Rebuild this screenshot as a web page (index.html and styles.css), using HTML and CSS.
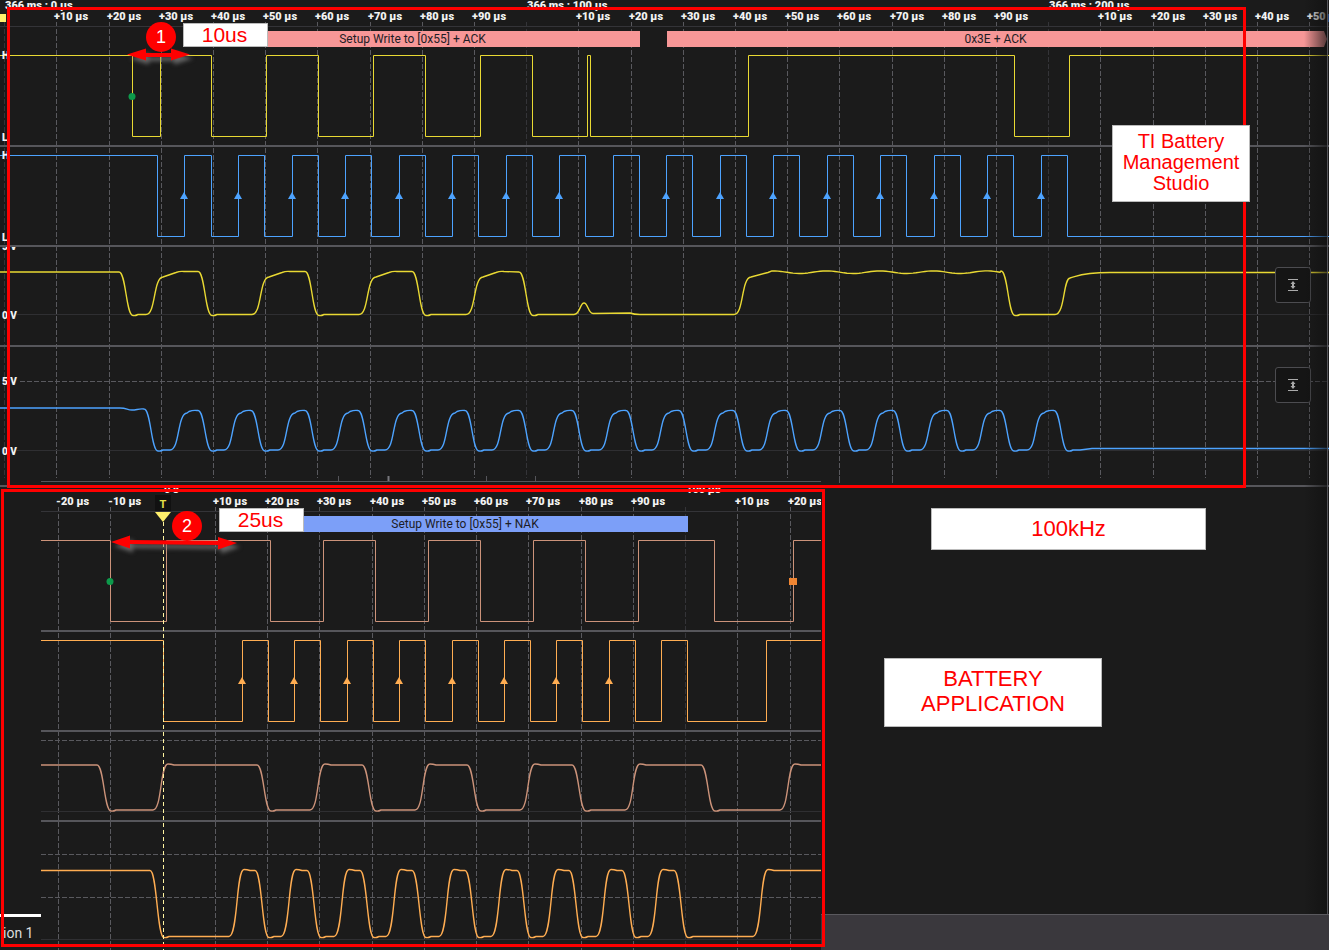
FILE: index.html
```html
<!DOCTYPE html>
<html lang="en">
<head>
<meta charset="utf-8">
<meta name="viewport" content="width=device-width, initial-scale=1">
<title>I2C bus timing comparison</title>
<link rel="stylesheet" href="styles.css">
</head>
<body>
<main class="board">
  <section class="panel panel--studio" aria-label="TI Battery Management Studio capture">
    <svg class="panel__grid" data-grid="studio" aria-hidden="true"></svg>
    <svg class="ruler ruler--studio" data-ruler="studio"></svg>
    <div class="track track--tall">
      <svg class="track__plot" data-plot="studioSda"></svg>
      <div class="bubbles bubbles--studio">
        <span class="bubble bubble--ack bubble--address">Setup Write to [0x55] + ACK</span>
        <span class="bubble bubble--ack bubble--data">0x3E + ACK</span>
      </div>
    </div>
    <div class="track track--digital"><svg class="track__plot" data-plot="studioScl"></svg></div>
    <div class="track track--digital">
      <svg class="track__plot" data-plot="studioSdaAnalog"></svg>
      <button class="fit" type="button" aria-label="Fit channel height"><svg width="12" height="14" viewBox="0 0 12 14"><path d="M1 1.5h10M1 12.5h10" stroke="#aaa" stroke-width="1"/><path d="M6 3l2.500 3h-1.500v2h1.500l-2.500 3-2.500-3h1.500v-2h-1.500z" fill="#aaa"/></svg></button>
    </div>
    <div class="track track--last">
      <svg class="track__plot" data-plot="studioSclAnalog"></svg>
      <button class="fit" type="button" aria-label="Fit channel height"><svg width="12" height="14" viewBox="0 0 12 14"><path d="M1 1.5h10M1 12.5h10" stroke="#aaa" stroke-width="1"/><path d="M6 3l2.500 3h-1.500v2h1.500l-2.500 3-2.500-3h1.500v-2h-1.500z" fill="#aaa"/></svg></button>
    </div>
  </section>

  <div class="lower">
    <div class="session"><span class="session__tab">ion 1</span></div>
    <section class="panel panel--app" aria-label="Battery application capture">
      <svg class="panel__grid" data-grid="app" aria-hidden="true"></svg>
      <svg class="ruler ruler--app" data-ruler="app"></svg>
      <div class="track track--tall">
        <svg class="track__plot" data-plot="appSda"></svg>
        <div class="bubbles bubbles--app">
          <span class="bubble bubble--nak">Setup Write to [0x55] + NAK</span>
        </div>
      </div>
      <div class="track track--digital"><svg class="track__plot" data-plot="appScl"></svg></div>
      <div class="track track--short"><svg class="track__plot" data-plot="appSdaAnalog"></svg></div>
      <div class="track track--open"><svg class="track__plot" data-plot="appSclAnalog"></svg></div>
      <svg class="trigger" width="18" height="464" aria-label="Trigger">
        <rect x="1" y="8" width="16" height="16" fill="#111"/>
        <text class="trigger__letter" x="9" y="21" text-anchor="middle">T</text>
        <path d="M1 25h16l-8 10z" fill="#fff06c"/>
        <path d="M9.500 35V464" stroke="#fff4a0" stroke-dasharray="4 3"/>
      </svg>
    </section>
    <aside class="side"><div class="statusbar"></div></aside>
  </div>

  <div class="edge"></div>

  <div class="frame frame--studio"></div>
  <div class="frame frame--app"></div>
  <p class="note note--period note--period-a">10us</p>
  <p class="note note--period note--period-b">25us</p>
  <p class="note note--studio">TI Battery Management Studio</p>
  <p class="note note--clock">100kHz</p>
  <p class="note note--app">BATTERY<br>APPLICATION</p>
  <svg class="arrow arrow--a" width="72" height="20" aria-hidden="true">
    <path class="arrow__shape" d="M0 6.500l19-6v4.500h25V.5l19 6-19 6V9H19v3.500z"/>
  </svg>
  <svg class="arrow arrow--b" width="136" height="22" aria-hidden="true">
    <path class="arrow__shape" d="M0 7l19-6.500v4.500l88 1V2l19 6-19 6.500V10l-88-1v4.500z"/>
  </svg>
  <span class="badge badge--a">1</span>
  <span class="badge badge--b">2</span>
</main>
<script src="plots.js"></script>
</body>
</html>
```
FILE: styles.css
```css
* { box-sizing: border-box; }

body {
  margin: 0;
  background: #1b1b1b;
  color: #eee;
  font-family: Roboto, "Liberation Sans", sans-serif;
}

.board {
  position: relative;
  min-height: 100vh;
  display: flex;
  flex-direction: column;
  overflow: hidden;
}

.panel { position: relative; min-width: 0; }

.panel__grid {
  position: absolute;
  inset: 0;
  width: 100%;
  height: 100%;
}

.ruler {
  position: relative;
  display: block;
  width: 100%;
  border-bottom: 1px solid #343438;
}
.ruler--studio { height: 27px; }
.ruler--app { height: 25px; }

.ruler text, .scale {
  font: 900 11px Roboto, "Liberation Sans", sans-serif;
  fill: #f2f2f2;
}
.scale { font-size: 10px; }

.track {
  position: relative;
  display: grid;
  align-items: start;
  border-bottom: 2px solid #56565b;
}
.track > * { grid-area: 1 / 1; }
.track__plot { display: block; width: 100%; height: 100%; }
.track--tall { height: 120px; }
.track--digital { height: 100px; }
.track--short { height: 90px; }
.track--last { height: 140px; }
.track--open { height: 128px; border-bottom: 0; }

.grid-line { stroke: #59595e; stroke-dasharray: 5 2; }
.grid-line--major { stroke: #343438; }
.zero-line { stroke: #2f2f32; }
.wave { fill: none; stroke-width: 1; }
.wave--analog { stroke-width: 1.400; stroke-linejoin: round; }
.yellow { stroke: #e9d933; }
.blue { stroke: #4da3ff; }
.tan { stroke: #cc937a; }
.orange { stroke: #ffad52; }
.tip--blue { fill: #4da3ff; }
.tip--orange { fill: #ffad52; }

.bubbles { display: flex; padding-top: 4px; }
.bubbles--studio { padding-left: 185px; padding-right: 2px; gap: 27px; }
.bubbles--app { padding-left: 201px; }
.bubble {
  height: 16px;
  color: #1d1d26;
  font-size: 12px;
  line-height: 16px;
  text-align: center;
  white-space: nowrap;
}
.bubble--ack { background: #f79797; }
.bubble--address { width: 455px; }
.bubble--data {
  flex: 1;
  padding-right: 3px;
  clip-path: polygon(0 0, calc(100% - 3px) 0, 100% 50%, calc(100% - 3px) 100%, 0 100%);
}
.bubble--nak { width: 446px; background: #7c9ff8; }

.fit {
  justify-self: end;
  display: flex;
  align-items: center;
  justify-content: center;
  width: 36px;
  height: 36px;
  margin: 20px 18px 0 0;
  padding: 0;
  border: 1px solid #4c4c50;
  border-radius: 3px;
  background: #151515;
}

.lower {
  flex: 1;
  display: grid;
  grid-template-columns: 41px 780px 1fr;
}

.session {
  display: flex;
  flex-direction: column;
  justify-content: flex-end;
}
.session__tab {
  height: 36px;
  padding-left: 3px;
  border-top: 3px solid #fff;
  color: #ddd;
  font-size: 14px;
  line-height: 32px;
  white-space: nowrap;
}

.trigger { position: absolute; left: 113px; top: 0; }
.trigger__letter { font: bold 11px Roboto, sans-serif; fill: #e6e04a; }

.side {
  display: flex;
  flex-direction: column;
  justify-content: flex-end;
}
.statusbar {
  height: 36px;
  border-top: 1px solid #5a595e;
  background: #3a383d;
}

.edge {
  position: absolute;
  top: 0;
  right: 1px;
  bottom: 36px;
  width: 24px;
  border-right: 1px solid #55555a;
  background: linear-gradient(to right, rgba(16, 16, 16, 0), rgba(16, 16, 16, 0.7));
  pointer-events: none;
}

.frame { position: absolute; border: 3px solid #f00; pointer-events: none; }
.frame--studio { left: 7px; top: 7px; width: 1239px; height: 481px; }
.frame--app { left: 1px; top: 489px; width: 824px; height: 458px; }

.note {
  position: absolute;
  display: flex;
  align-items: center;
  justify-content: center;
  margin: 0;
  padding-bottom: 2px;
  border: 1px solid #bbb;
  background: #fff;
  color: #f00;
  font-family: "Liberation Sans", Arial, sans-serif;
  font-size: 22px;
  line-height: 25px;
  text-align: center;
}
.note--period { width: 85px; height: 24px; padding-right: 2px; font-size: 21px; }
.note--period-a { left: 183px; top: 23px; }
.note--period-b { left: 219px; top: 508px; }
.note--studio {
  left: 1112px;
  top: 125px;
  width: 138px;
  height: 77px;
  font-size: 20px;
  line-height: 21px;
}
.note--clock { left: 931px; top: 508px; width: 275px; height: 42px; }
.note--app { left: 884px; top: 658px; width: 218px; height: 69px; padding-bottom: 4px; }

.arrow { position: absolute; overflow: visible; }
.arrow--a { left: 127px; top: 48px; }
.arrow--b { left: 111px; top: 535px; }
.arrow__shape { fill: #f00; filter: drop-shadow(3px 4px 2px rgba(120, 120, 120, 0.800)); }

.badge {
  position: absolute;
  width: 30px;
  height: 30px;
  border-radius: 50%;
  background: #f00;
  color: #fff;
  font: 18px/30px "Liberation Sans", Arial, sans-serif;
  text-align: center;
}
.badge--a { left: 146px; top: 22px; }
.badge--b { left: 172px; top: 511px; }
```
FILE: plots.js
```js
const FAR = 4000;

const views = {
  studio: { origin: 0, zero: 4.6, step: 52.2, first: 0, count: 26, gridTop: 22, labelY: 20, majorY: 9,
    majors: { 0: "366 ms : 0 µs", 10: "366 ms : 100 µs", 20: "366 ms : 200 µs" } },
  app: { origin: 41, zero: 163.24, step: 52.25, first: -2, count: 15, gridTop: 20, labelY: 18, majorY: 6,
    majors: { 0: "0 s", 10: "100 µs" } }
};

const line = (cls, x1, y1, x2, y2) =>
  `<line class="${cls}" x1="${x1}" y1="${y1}" x2="${x2}" y2="${y2}"/>`;

function eachTick(view, fn) {
  for (let i = view.first; i < view.first + view.count; i++) {
    fn(i, Math.floor(view.zero + i * view.step) - view.origin);
  }
}

function grid(name) {
  const view = views[name];
  let out = "";
  eachTick(view, (i, x) => {
    if (name === "app" && i === 0) return;
    const major = view.majors[i] ? " grid-line--major" : "";
    out += line("grid-line" + major, x + 0.5, view.gridTop, x + 0.5, name === "studio" ? 478 : "100%");
  });
  return out;
}

function ruler(name) {
  const view = views[name];
  let out = name === "studio" ? '<rect x="0" y="14" width="6" height="8" fill="#fff06c"/>' : "";
  eachTick(view, (i, x) => {
    if (view.majors[i]) {
      out += `<text x="${x + 1}" y="${view.majorY}">${view.majors[i]}</text>`;
    } else {
      const n = i < 0 ? i * 10 : "+" + (i % 10) * 10;
      out += `<text x="${x - 2}" y="${view.labelY}">${n} µs</text>`;
    }
  });
  return out;
}

/* Square wave that starts high and toggles at every edge. */
function digital(cls, edges, hi, lo, origin) {
  let d = `M${-origin} ${hi}`;
  let high = true;
  edges.forEach(x => {
    d += `H${x + 0.5 - origin}V${high ? lo : hi}`;
    high = !high;
  });
  return `<path class="wave ${cls}" d="${d}H${FAR}"/>`;
}

function tips(cls, xs, y, origin) {
  return xs.map(x => {
    const cx = x - origin;
    return `<path class="${cls}" d="M${cx} ${y}l4 7h-8z"/>`;
  }).join("");
}

const fall = (x, hi, lo) =>
  `L${x - 13} ${hi}C${x - 6} ${hi} ${x - 6} ${lo + 1} ${x + 1} ${lo + 1}Q${x + 3} ${lo + 1.5} ${x + 6} ${lo}`;
const softRise = (x, hi, lo, bend, ramp) =>
  `L${x - 14} ${lo}C${x - 4} ${lo} ${x - 7} ${hi + bend} ${x + 3} ${hi + bend - 1}L${x + ramp - 4} ${hi + 0.5}Q${x + ramp} ${hi - 1} ${x + ramp + 4} ${hi - 0.5}`;
const rise = (x, hi, lo) =>
  `L${x - 13} ${lo}C${x - 4} ${lo} ${x - 6} ${hi - 1} ${x + 2} ${hi - 1}Q${x + 5} ${hi - 1} ${x + 8} ${hi}`;
const analog = (cls, d, origin) =>
  `<path class="wave wave--analog ${cls}" transform="translate(${-origin} 0)" d="${d}"/>`;

const studioSda = [132, 160, 211, 266, 318, 373, 425, 480, 532, 587, 590, 748, 1014, 1069];
const studioScl = [157, 184, 211, 238, 264, 292, 318, 345, 371, 399, 425, 452, 478, 506, 532, 559, 585, 613,
  639, 666, 692, 720, 746, 773, 799, 827, 853, 880, 906, 934, 960, 987, 1013, 1041, 1067];
const appSda = [110, 166, 270, 323, 375, 428, 480, 533, 585, 638, 714, 793];
const appScl = [163, 242, 268, 294, 320, 347, 373, 399, 425, 452, 478, 504, 530, 556, 582, 609, 635, 661, 687, 766];
const rising = edges => edges.filter((x, i) => i % 2 === 1);
const label = (text, y) => `<text class="scale" x="2" y="${y}">${text}</text>`;

/* Clock crosstalk seen on the data line while it is held high. */
function ripple(from, to, mid) {
  let d = "";
  for (let x = from; x <= to; x += 3) {
    d += `L${x} ${(mid - 1.3 * Math.cos(2 * Math.PI * (x - 773) / 53.4)).toFixed(2)}`;
  }
  return d;
}

function studioSdaCurve() {
  const hi = 25, lo = 67.5;
  let d = `M0 ${hi}`;
  for (let i = 0; i < 8; i += 2) {
    d += fall(studioSda[i], hi - (i ? 0.5 : 0), lo) + softRise(studioSda[i + 1], hi, lo, 6, 20);
  }
  d += fall(532, hi, lo) + `L574 ${lo}C580 ${lo} 580 56 584 56S588 66 593 66.500L630 66Q634 ${lo} 640 ${lo}`;
  d += `L734 ${lo}C744 ${lo} 741 31 751 30L768 25.500` + ripple(772, 1000, 25.2);
  d += fall(1014, 24, lo) + `L1055 ${lo}C1065 ${lo} 1063 32 1070 31C1078 29 1082 25.500 1110 25.500H${FAR}`;
  return d;
}

function studioSclCurve() {
  const hi = 64, lo = 103;
  let d = "M0 61H120C127 61 127 63 132 63S138 61.500 144 62";
  d += fall(157, 62, lo);
  for (let i = 1; i < studioScl.length; i += 2) {
    d += softRise(studioScl[i], hi, lo, 3, 9) + fall(studioScl[i + 1], hi - 0.5, lo);
  }
  return d + `H1080L1092 101.500H${FAR}`;
}

function stepCurve(edges, hi, lo) {
  let d = `M0 ${hi}`;
  edges.forEach((x, i) => { d += (i % 2 ? rise : fall)(x, hi, lo); });
  return d + `H${FAR}`;
}

const timeline = '<path d="M41 134.500H821" stroke="#55555a"/>' +
  '<path d="M338.500 129v5M486.500 129v5M535.500 129v5M839.500 129v7M892.500 129v7" stroke="#55555a"/>' +
  '<path d="M388.500 129v5" stroke="#77777c" stroke-width="2"/>';

const plots = {
  studioSda: () => digital("yellow", studioSda, 28.5, 109.5, 0) +
    '<circle cx="132" cy="69.500" r="3.500" fill="#0d9a4b"/>' + label("H", 32) + label("L", 114),
  studioScl: () => digital("blue", studioScl, 8.5, 89.5, 0) +
    tips("tip--blue", rising(studioScl).filter(x => x !== 613), 45, 0) + label("H", 12) + label("L", 94),
  studioSdaAnalog: () => line("zero-line", 17, 67.5, "100%", 67.5) +
    analog("yellow", studioSdaCurve(), 0) + label("5 V", 3) + label("0 V", 72),
  studioSclAnalog: () => line("grid-line", 20, 34.5, "100%", 34.5) + line("zero-line", 17, 103.5, "100%", 103.5) +
    timeline + analog("blue", studioSclCurve(), 0) + label("5 V", 38) + label("0 V", 108),
  appSda: () => digital("tan", appSda, 28.5, 109.5, 41) +
    '<circle cx="69" cy="69.500" r="3.500" fill="#0d9a4b"/><rect x="748" y="66" width="8" height="7" fill="#ef8532"/>',
  appScl: () => digital("orange", appScl, 8.5, 89.5, 41) +
    tips("tip--orange", rising(appScl).filter(x => x < 620), 45, 41),
  appSdaAnalog: () => line("grid-line", 0, 8.5, "100%", 8.5) + line("zero-line", 0, 79.5, "100%", 79.5) +
    analog("tan", stepCurve(appSda, 33, 78), 41),
  appSclAnalog: () => line("grid-line", 0, 32.5, "100%", 32.5) + line("grid-line", 0, 75.5, "100%", 75.5) +
    line("zero-line", 0, 117.5, "100%", 117.5) + analog("orange", stepCurve(appScl, 48.5, 114.5), 41)
};

document.querySelectorAll("[data-grid]").forEach(el => { el.innerHTML = grid(el.dataset.grid); });
document.querySelectorAll("[data-ruler]").forEach(el => { el.innerHTML = ruler(el.dataset.ruler); });
document.querySelectorAll("[data-plot]").forEach(el => { el.innerHTML = plots[el.dataset.plot](); });
```
